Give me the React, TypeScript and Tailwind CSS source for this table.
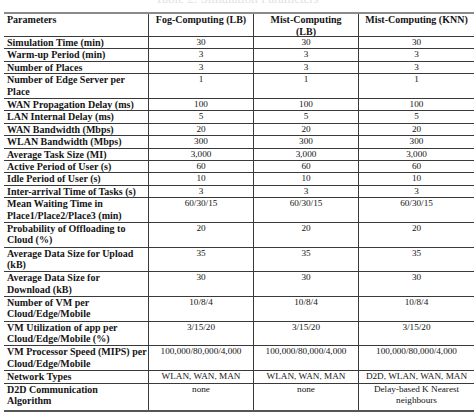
const ROWS: { label: string[]; values: string[][] }[] = [
  { label: ['Simulation Time (min)'], values: [['30'], ['30'], ['30']] },
  { label: ['Warm-up Period (min)'], values: [['3'], ['3'], ['3']] },
  { label: ['Number of Places'], values: [['3'], ['3'], ['3']] },
  { label: ['Number of Edge Server per', 'Place'], values: [['1'], ['1'], ['1']] },
  { label: ['WAN Propagation Delay (ms)'], values: [['100'], ['100'], ['100']] },
  { label: ['LAN Internal Delay (ms)'], values: [['5'], ['5'], ['5']] },
  { label: ['WAN Bandwidth (Mbps)'], values: [['20'], ['20'], ['20']] },
  { label: ['WLAN Bandwidth (Mbps)'], values: [['300'], ['300'], ['300']] },
  { label: ['Average Task Size (MI)'], values: [['3,000'], ['3,000'], ['3,000']] },
  { label: ['Active Period of User (s)'], values: [['60'], ['60'], ['60']] },
  { label: ['Idle Period of User (s)'], values: [['10'], ['10'], ['10']] },
  { label: ['Inter-arrival Time of Tasks (s)'], values: [['3'], ['3'], ['3']] },
  { label: ['Mean Waiting Time in', 'Place1/Place2/Place3 (min)'], values: [['60/30/15'], ['60/30/15'], ['60/30/15']] },
  { label: ['Probability of Offloading to', 'Cloud (%)'], values: [['20'], ['20'], ['20']] },
  { label: ['Average Data Size for Upload', '(kB)'], values: [['35'], ['35'], ['35']] },
  { label: ['Average Data Size for', 'Download (kB)'], values: [['30'], ['30'], ['30']] },
  { label: ['Number of VM per', 'Cloud/Edge/Mobile'], values: [['10/8/4'], ['10/8/4'], ['10/8/4']] },
  { label: ['VM Utilization of app per', 'Cloud/Edge/Mobile (%)'], values: [['3/15/20'], ['3/15/20'], ['3/15/20']] },
  { label: ['VM Processor Speed (MIPS) per', 'Cloud/Edge/Mobile'], values: [['100,000/80,000/4,000'], ['100,000/80,000/4,000'], ['100,000/80,000/4,000']] },
  { label: ['Network Types'], values: [['WLAN, WAN, MAN'], ['WLAN, WAN, MAN'], ['D2D, WLAN, WAN, MAN']] },
  { label: ['D2D Communication', 'Algorithm'], values: [['none'], ['none'], ['Delay-based K Nearest', 'neighbours']] },
];

function Lines({ lines }: { lines: string[] }) {
  return (
    <>
      {lines.map((l, i) => (
        <div key={i} className="whitespace-nowrap">{l}</div>
      ))}
    </>
  );
}

export default function App() {
  return (
    <div className="w-[474px] h-[412px] overflow-hidden bg-white text-[#141414] font-['Liberation_Serif',serif] text-[10px] leading-[11.4px]">
      {/* faded caption, mostly cut off at the top edge */}
      <div className="h-[4px] overflow-hidden flex items-end justify-center">
        <div className="text-[13px] leading-[16px] text-[#e2e2e2] whitespace-nowrap -mb-[3px]">Table 2: Simulation Parameters</div>
      </div>
      <div className="pt-[8px] pl-[4px]">
        <div className="w-[470px] border-t-[2px] border-t-[#8a8a8a]">
          {/* header */}
          <div className="grid grid-cols-[145px_105px_105px_115px] h-[23px] border-b border-b-[#3a3a3a] font-bold leading-[11.5px]">
            <div className="text-left px-[3px] border-r border-r-[#3a3a3a]">Parameters</div>
            <div className="text-center px-[2px] border-r border-r-[#3a3a3a]">Fog-Computing (LB)</div>
            <div className="text-center px-[2px] border-r border-r-[#3a3a3a]">
              <Lines lines={['Mist-Computing', '(LB)']} />
            </div>
            <div className="text-center px-[2px]">Mist-Computing (KNN)</div>
          </div>
          {ROWS.map((r, i) => {
            const dbl = r.label.length > 1;
            const last = i === ROWS.length - 1;
            return (
              <div
                key={i}
                className={`grid grid-cols-[145px_105px_105px_115px] ${last ? 'border-b-[2px] border-b-[#555]' : 'border-b border-b-[#3a3a3a]'}`}
              >
                <div className={`text-left font-bold px-[3px] border-r border-r-[#3a3a3a] ${last ? 'pb-[4px]' : dbl ? 'pb-[0.9px]' : ''}`}>
                  <Lines lines={r.label} />
                </div>
                {r.values.map((v, j) => (
                  <div key={j} className={`text-center px-[2px] text-[9.2px] ${j < 2 ? 'border-r border-r-[#3a3a3a]' : ''}`}>
                    <Lines lines={v} />
                  </div>
                ))}
              </div>
            );
          })}
        </div>
      </div>
    </div>
  );
}
